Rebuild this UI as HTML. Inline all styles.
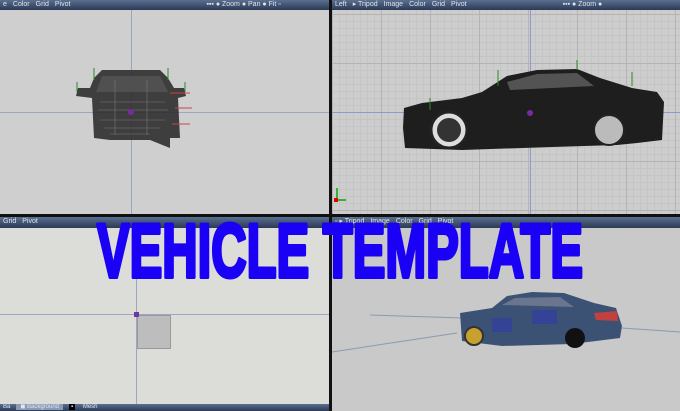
<!DOCTYPE html>
<html><head><meta charset="utf-8"><style>
*{margin:0;padding:0;box-sizing:border-box}
body{width:680px;height:411px;overflow:hidden;background:#111;position:relative;font-family:"Liberation Sans",sans-serif}
.p{position:absolute;overflow:hidden}
.bar{position:absolute;height:10px;background:linear-gradient(#5a6f90,#2c3a55);color:#dfe6f0;font-size:7px;line-height:10px;white-space:nowrap;padding-left:3px}
.bar span{margin-right:6px}
</style></head><body>
<!-- top-left -->
<div class="p" style="left:0;top:10px;width:329px;height:204px;background:#cfcfcf">
<div style="position:absolute;left:131px;top:0;width:1px;height:204px;background:#9aa6c4"></div>
<div style="position:absolute;left:0;top:102px;width:329px;height:1px;background:#9aa6c4"></div>
<svg width="329" height="204" style="position:absolute;left:0;top:0">
<path d="M94 68 L102 60 L160 60 L168 68 L174 78 L184 78 L186 86 L178 88 L180 128 L170 128 L170 138 L150 130 L110 130 L94 128 L92 88 L76 86 L78 78 L90 78 Z" fill="#2e2e2e" opacity=".9"/>
<path d="M102 66 L160 66 L168 82 L96 82 Z" fill="#505050"/>
<g stroke="#777" stroke-width=".6" fill="none"><path d="M100 92 H165 M98 100 H168 M100 110 H165 M104 118 H160 M110 124 H150 M115 70 V125 M147 70 V125"/></g>
<circle cx="131" cy="102" r="3" fill="#7a2aa0"/>
<g stroke="#c44" stroke-width="1"><path d="M170 83 H190 M175 98 H192 M172 114 H190"/></g>
<g stroke="#2a8a2a" stroke-width="1"><path d="M94 58 V70 M168 58 V70 M77 72 V82 M185 72 V82"/></g>
</svg>
</div>
<div class="bar" style="left:0;top:0;width:329px"><span>e</span><span>Color</span><span>Grid</span><span>Pivot</span><span style="margin-left:130px">▪▪▪ ● Zoom ● Pan ● Fit ▫</span></div>
<!-- top-right -->
<div class="p" style="left:332px;top:10px;width:348px;height:204px;background-color:#cdcdcd;background-image:linear-gradient(#b4b4b4 1px,transparent 1px),linear-gradient(90deg,#b4b4b4 1px,transparent 1px),linear-gradient(#c5c5c5 1px,transparent 1px),linear-gradient(90deg,#c5c5c5 1px,transparent 1px);background-size:49px 49px,49px 49px,7px 7px,7px 7px;background-position:0 4px,0 0,0 4px,0 0">
<div style="position:absolute;left:198px;top:0;width:1px;height:204px;background:#8a9ccc"></div>
<div style="position:absolute;left:0;top:102px;width:348px;height:1px;background:#8a9ccc"></div>
<svg width="348" height="204" style="position:absolute;left:0;top:0">
<path d="M72 98 L90 93 L130 88 L150 82 L175 66 L205 60 L245 59 L268 68 L300 78 L325 82 L332 92 L330 130 L305 133 L285 135 L220 137 L130 140 L73 138 L71 118 Z" fill="#1e1e1e"/>
<path d="M175 72 L205 64 L245 63 L262 76 L178 80 Z" fill="#6a6a6a" opacity=".7"/>
<circle cx="117" cy="120" r="18" fill="#ddd" stroke="#222" stroke-width="3"/>
<circle cx="117" cy="120" r="12" fill="#333"/>
<circle cx="277" cy="120" r="15" fill="#bbb" stroke="#222" stroke-width="2"/>
<circle cx="198" cy="103" r="3" fill="#7a2aa0"/>
<g stroke="#2a8a2a" stroke-width="1"><path d="M98 88 V100 M166 60 V76 M245 50 V60 M300 62 V76"/></g>
<path d="M5 190 V178 M5 190 H14" stroke="#0a0" stroke-width="1.5" fill="none"/><rect x="2" y="188" width="4" height="4" fill="#d00"/>
</svg>
</div>
<div class="bar" style="left:332px;top:0;width:348px"><span>Left</span><span>▸ Tripod</span><span>Image</span><span>Color</span><span>Grid</span><span>Pivot</span><span style="margin-left:90px">▪▪▪ ● Zoom ●</span></div>
<!-- bottom-left -->
<div class="p" style="left:0;top:228px;width:329px;height:176px;background:#dcdcd8">
<div style="position:absolute;left:136px;top:0;width:1px;height:176px;background:#9aa6c4"></div>
<div style="position:absolute;left:0;top:86px;width:329px;height:1px;background:#9aa6c4"></div>
<div style="position:absolute;left:137px;top:87px;width:34px;height:34px;background:#bdbdbd;border:1px solid #999"></div>
<div style="position:absolute;left:134px;top:84px;width:5px;height:5px;background:#6a3aa0"></div>
</div>
<div class="bar" style="left:0;top:217px;width:329px;height:11px"><span>Grid</span><span>Pivot</span></div>
<div class="bar" style="left:0;top:404px;width:329px;height:7px;line-height:7px;font-size:6px"><span>Ba</span><span style="background:#8a9ab5;padding:0 4px">◼ Background</span><span style="background:#000;padding:0 2px">▪</span> Mesh</div>
<!-- bottom-right -->
<div class="p" style="left:332px;top:228px;width:348px;height:183px;background:#c9c9c9">
<svg width="348" height="183" style="position:absolute;left:0;top:0">
<path d="M38 87 L130 90 M0 124 L125 105 M290 100 L348 104" stroke="#8a9ab0" stroke-width="1"/>
<path d="M128 85 L160 80 L175 68 L200 64 L232 65 L262 75 L284 80 L290 98 L288 110 L240 116 L170 118 L130 113 Z" fill="#3c5275"/>
<path d="M170 77 L183 70 L228 69 L242 79 Z" fill="#6a7590"/>
<path d="M200 82 L225 82 L225 96 L200 96 Z M160 90 L180 90 L180 104 L160 104 Z" fill="#3340a0" opacity=".8"/>
<path d="M262 85 L285 83 L286 93 L264 92 Z" fill="#c24040"/>
<circle cx="142" cy="108" r="9" fill="#c8a030" stroke="#333" stroke-width="2"/>
<circle cx="243" cy="110" r="10" fill="#111"/>
</svg>
</div>
<div class="bar" style="left:332px;top:217px;width:348px;height:11px"><span style="margin-left:0">▫ ▸ Tripod</span><span>Image</span><span>Color</span><span>Grid</span><span>Pivot</span></div>
<!-- title -->
<svg width="680" height="411" style="position:absolute;left:0;top:0">
<text x="97" y="277" textLength="486" lengthAdjust="spacingAndGlyphs" font-family="Liberation Sans Narrow, Liberation Sans, sans-serif" font-weight="bold" font-size="76" fill="#1a00f5" stroke="#1a00f5" stroke-width="4" stroke-linejoin="round">VEHICLE TEMPLATE</text>
</svg>
</body></html>
